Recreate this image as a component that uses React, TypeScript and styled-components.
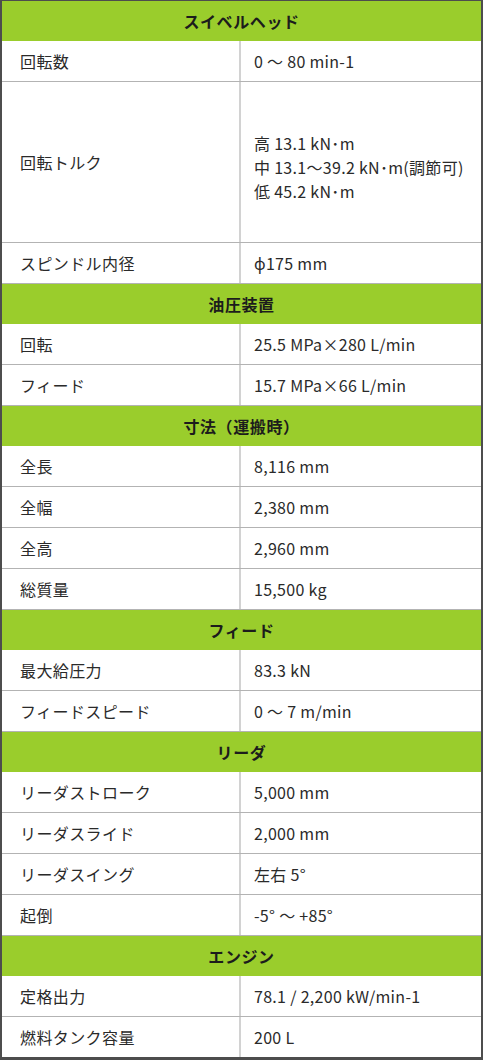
import React from 'react';
import styled, { createGlobalStyle } from 'styled-components';

const Global = createGlobalStyle`
    html, body {
        margin: 0;
        padding: 0;
        background: #ffffff;
    }
    body {
        font-family: "Noto Sans CJK JP", "Noto Sans", sans-serif;
    }
`

const Sheet = styled.div`
    width: 483px;
    height: 1060px;
    box-sizing: border-box;
    border: 2px solid #4d4d4d;
    border-top-width: 1px;
    border-bottom-width: 3px;
    display: flex;
    flex-direction: column;
`

const Heading = styled.div`
    flex: 1 1 0;
    background: #9acd2c;
    display: flex;
    align-items: center;
    justify-content: center;
    font-size: 16px;
    font-weight: 700;
    color: #1c1c1c;
    letter-spacing: 0.6px;
`

const Row = styled.div<{ $span?: number }>`
    flex: ${p => p.$span ?? 1} 1 0;
    display: grid;
    grid-template-columns: 239px 1fr;
    border-bottom: 1px solid #b3b3b3;
    box-sizing: border-box;
    &:last-child {
        border-bottom: none;
    }
`

const Label = styled.div`
    display: flex;
    align-items: center;
    padding-left: 18px;
    border-right: 2px solid #d2d2d2;
    font-size: 16px;
    letter-spacing: 0.4px;
    color: #2a2a2a;
`

const Value = styled.div<{ $multi?: boolean }>`
    display: flex;
    flex-direction: column;
    justify-content: center;
    padding-left: 13px;
    padding-top: ${p => (p.$multi ? '10px' : '0')};
    font-size: 16px;
    letter-spacing: 0.3px;
    line-height: 24px;
    color: #2a2a2a;
    white-space: nowrap;
`

type Item = { label: string; value: string[]; span?: number };
type Section = { title: string; items: Item[] };

const data: Section[] = [
    {
        title: 'スイベルヘッド',
        items: [
            { label: '回転数', value: ['0 ～ 80 min-1'] },
            {
                label: '回転トルク',
                value: ['高 13.1 kN･m', '中 13.1～39.2 kN･m(調節可)', '低 45.2 kN･m'],
                span: 4,
            },
            { label: 'スピンドル内径', value: ['ϕ175 mm'] },
        ],
    },
    {
        title: '油圧装置',
        items: [
            { label: '回転', value: ['25.5 MPa×280 L/min'] },
            { label: 'フィード', value: ['15.7 MPa×66 L/min'] },
        ],
    },
    {
        title: '寸法（運搬時）',
        items: [
            { label: '全長', value: ['8,116 mm'] },
            { label: '全幅', value: ['2,380 mm'] },
            { label: '全高', value: ['2,960 mm'] },
            { label: '総質量', value: ['15,500 kg'] },
        ],
    },
    {
        title: 'フィード',
        items: [
            { label: '最大給圧力', value: ['83.3 kN'] },
            { label: 'フィードスピード', value: ['0 ～ 7 m/min'] },
        ],
    },
    {
        title: 'リーダ',
        items: [
            { label: 'リーダストローク', value: ['5,000 mm'] },
            { label: 'リーダスライド', value: ['2,000 mm'] },
            { label: 'リーダスイング', value: ['左右 5°'] },
            { label: '起倒', value: ['-5° ～ +85°'] },
        ],
    },
    {
        title: 'エンジン',
        items: [
            { label: '定格出力', value: ['78.1 / 2,200 kW/min-1'] },
            { label: '燃料タンク容量', value: ['200 L'] },
        ],
    },
];

export default function App() {
    return (
        <>
            <Global />
            <Sheet>
                {data.map(section => (
                    <React.Fragment key={section.title}>
                        <Heading>{section.title}</Heading>
                        {section.items.map(item => (
                            <Row key={item.label} $span={item.span}>
                                <Label>{item.label}</Label>
                                <Value $multi={item.value.length > 1}>
                                    {item.value.map(line => (
                                        <span key={line}>{line}</span>
                                    ))}
                                </Value>
                            </Row>
                        ))}
                    </React.Fragment>
                ))}
            </Sheet>
        </>
    );
}
